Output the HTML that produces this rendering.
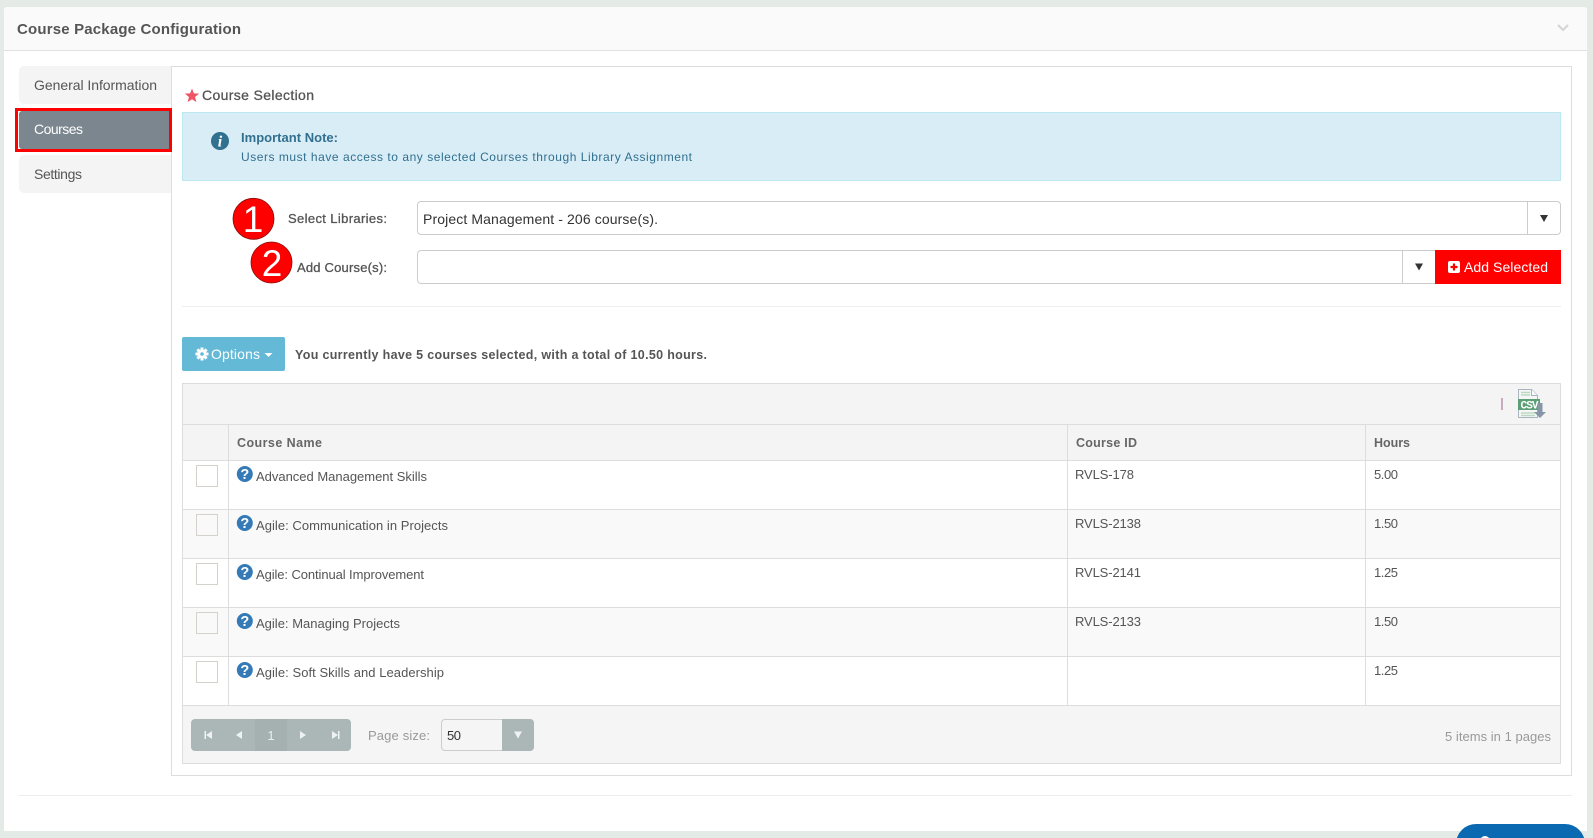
<!DOCTYPE html>
<html lang="en">
<head>
<meta charset="utf-8">
<title>Course Package Configuration</title>
<style>
html,body{margin:0;padding:0;width:1593px;height:838px;overflow:hidden;background:#e4ebe7;font-family:"Liberation Sans",Arial,sans-serif}
#wrap{position:relative;width:1593px;height:838px;overflow:hidden}
.a{position:absolute;box-sizing:border-box}
svg{position:absolute;left:0;top:0}
text{font-family:"Liberation Sans",Arial,sans-serif}
.sb{stroke-width:.3}
</style>
</head>
<body>
<div id="wrap">
<div class="a" style="left:4px;top:7px;width:1583px;height:824px;background:#fff;border-radius:3px 3px 0 0"></div>
<div class="a" style="left:4px;top:7px;width:1583px;height:44px;background:#fafafa;border-bottom:1px solid #e1e1e1;border-radius:3px 3px 0 0"></div>

<div class="a" style="left:19px;top:66px;width:153px;height:38px;background:#f4f4f4;border-radius:5px 0 0 5px"></div>
<div class="a" style="left:19px;top:155px;width:153px;height:38px;background:#f4f4f4;border-radius:5px 0 0 5px"></div>
<div class="a" style="left:171px;top:66px;width:1401px;height:710px;background:#fff;border:1px solid #ddd"></div>
<div class="a" style="left:15px;top:108px;width:157px;height:44px;background:#fff;border:3px solid #f00"></div>
<div class="a" style="left:19px;top:111px;width:150px;height:38px;background:#7b868e;border-radius:3px 0 0 3px"></div>

<div class="a" style="left:182px;top:112px;width:1379px;height:69px;background:#d9edf7;border:1px solid #bce8f1"></div>

<div class="a" style="left:417px;top:201px;width:1144px;height:34px;background:#fff;border:1px solid #ccc;border-radius:4px"></div>
<div class="a" style="left:1527px;top:201px;width:1px;height:34px;background:#ccc"></div>
<div class="a" style="left:417px;top:250px;width:1019px;height:34px;background:#fff;border:1px solid #ccc;border-radius:4px 0 0 4px"></div>
<div class="a" style="left:1402px;top:250px;width:1px;height:34px;background:#ccc"></div>
<div class="a" style="left:1435px;top:250px;width:126px;height:34px;background:#f00"></div>
<div class="a" style="left:182px;top:306px;width:1379px;height:1px;background:#eee"></div>

<div class="a" style="left:182px;top:337px;width:103px;height:34px;background:#63b9d6;border-radius:2px"></div>

<div class="a" style="left:182px;top:383px;width:1379px;height:381px;background:#fff;border:1px solid #ddd"></div>
<div class="a" style="left:183px;top:384px;width:1377px;height:41px;background:#f4f4f4;border-bottom:1px solid #ddd"></div>
<div class="a" style="left:183px;top:425px;width:1377px;height:36px;background:#f4f4f4;border-bottom:1px solid #ddd"></div>
<div class="a" style="left:183px;top:461px;width:1377px;height:49px;background:#fff;border-bottom:1px solid #ddd"></div>
<div class="a" style="left:183px;top:510px;width:1377px;height:49px;background:#f9f9f9;border-bottom:1px solid #ddd"></div>
<div class="a" style="left:183px;top:559px;width:1377px;height:49px;background:#fff;border-bottom:1px solid #ddd"></div>
<div class="a" style="left:183px;top:608px;width:1377px;height:49px;background:#f9f9f9;border-bottom:1px solid #ddd"></div>
<div class="a" style="left:183px;top:657px;width:1377px;height:49px;background:#fff;border-bottom:1px solid #ddd"></div>
<div class="a" style="left:183px;top:706px;width:1377px;height:57px;background:#f5f5f5"></div>
<div class="a" style="left:228px;top:425px;width:1px;height:280px;background:#ddd"></div>
<div class="a" style="left:1067px;top:425px;width:1px;height:280px;background:#ddd"></div>
<div class="a" style="left:1365px;top:425px;width:1px;height:280px;background:#ddd"></div>

<div class="a" style="left:196px;top:465px;width:22px;height:22px;background:#fff;border:1px solid #d5d2cc"></div>
<div class="a" style="left:196px;top:514px;width:22px;height:22px;background:#f9f9f9;border:1px solid #d5d2cc"></div>
<div class="a" style="left:196px;top:563px;width:22px;height:22px;background:#fff;border:1px solid #d5d2cc"></div>
<div class="a" style="left:196px;top:612px;width:22px;height:22px;background:#f9f9f9;border:1px solid #d5d2cc"></div>
<div class="a" style="left:196px;top:661px;width:22px;height:22px;background:#fff;border:1px solid #d5d2cc"></div>

<div class="a" style="left:191px;top:719px;width:160px;height:32px;background:#abb7b7;border-radius:4px"></div>
<div class="a" style="left:255px;top:719px;width:32px;height:32px;background:#a5b1b1"></div>
<div class="a" style="left:441px;top:719px;width:93px;height:32px;background:#f5f5f5;border:1px solid #ccc;border-radius:4px"></div>
<div class="a" style="left:502px;top:719px;width:32px;height:32px;background:#abb7b7;border-radius:0 4px 4px 0"></div>

<div class="a" style="left:18px;top:795px;width:1554px;height:1px;background:#eee"></div>
<div class="a" style="left:1456px;top:824px;width:129px;height:40px;background:#0a69b0;border-radius:20px"></div>

<svg width="1593" height="838" viewBox="0 0 1593 838">
  <text x="17" y="34" font-size="15" font-weight="700" fill="#555" textLength="224">Course Package Configuration</text>
  <path d="M1558 25l5 5 5-5" fill="none" stroke="#d4d4d4" stroke-width="2"/>

  <text x="34" y="90" font-size="14" fill="#555" textLength="123">General Information</text>
  <text x="34" y="134" font-size="14" fill="#fff" textLength="49">Courses</text>
  <text x="34" y="179" font-size="14" fill="#555" textLength="48">Settings</text>

  <path d="M192 88.500L193.880 93.410 199.130 93.680 195.040 96.990 196.410 102.070 192 99.200 187.590 102.070 188.960 96.990 184.870 93.680 190.120 93.410z" fill="#ef5465"/>
  <text x="202" y="100" font-size="14" fill="#555" stroke="#555" class="sb" textLength="112">Course Selection</text>

  <circle cx="220" cy="141" r="9" fill="#31708f"/>
  <text x="220" y="146.500" font-size="16" font-weight="700" font-style="italic" fill="#fff" text-anchor="middle" style="font-family:'Liberation Serif',serif">i</text>
  <text x="241" y="142" font-size="13" font-weight="700" fill="#31708f" textLength="97">Important Note:</text>
  <text x="241" y="161" font-size="12" fill="#31708f" textLength="451">Users must have access to any selected Courses through Library Assignment</text>

  <circle cx="253.500" cy="218.800" r="20.500" fill="#f00" stroke="#8c0a0a" stroke-width=".8"/>
  <text x="253" y="232" font-size="37" fill="#fff" text-anchor="middle">1</text>
  <circle cx="271.500" cy="262.500" r="20.500" fill="#f00" stroke="#8c0a0a" stroke-width=".8"/>
  <text x="272" y="276" font-size="37" fill="#fff" text-anchor="middle">2</text>

  <text x="288" y="223" font-size="13" fill="#555" stroke="#555" class="sb" textLength="99">Select Libraries:</text>
  <text x="297" y="272" font-size="13" fill="#555" stroke="#555" class="sb" textLength="90">Add Course(s):</text>
  <text x="423" y="224" font-size="14" fill="#333" textLength="235">Project Management - 206 course(s).</text>
  <path d="M1540 215h8l-4 7z" fill="#333"/>
  <path d="M1415 263.500h8l-4 7z" fill="#333"/>

  <rect x="1448" y="261" width="12" height="12" rx="2" fill="#fff"/>
  <path d="M1454 263.500v7M1450.500 267h7" stroke="#f00" stroke-width="2.200"/>
  <text x="1464" y="272" font-size="14" fill="#fff" textLength="84">Add Selected</text>

  <g transform="translate(202 354)" fill="#fff">
    <circle r="4.500"/>
    <path d="M-1.500-6.500h3v3h-3zM-1.500 3.500h3v3h-3zM-6.500-1.500h3v3h-3zM3.500-1.500h3v3h-3z"/>
    <path d="M-1.500-6.500h3v3h-3zM-1.500 3.500h3v3h-3zM-6.500-1.500h3v3h-3zM3.500-1.500h3v3h-3z" transform="rotate(45)"/>
    <circle r="1.800" fill="#63b9d6"/>
  </g>
  <text x="211" y="359" font-size="14" fill="#fff" textLength="49">Options</text>
  <path d="M264.500 353h8l-4 4z" fill="#fff"/>
  <text x="295" y="359" font-size="12.500" font-weight="700" fill="#555" textLength="412">You currently have 5 courses selected, with a total of 10.50 hours.</text>

  <rect x="1501.500" y="398" width="1" height="12" fill="#a0608c"/>
  <path d="M1518.500 389.500h13l6 6v22h-19z" fill="#f4f7f5" stroke="#a9b4bf"/>
  <path d="M1531.500 389.500v6h6" fill="#fff" stroke="#a9b4bf"/>
  <path d="M1521 392.500h9M1521 395h9M1521 413h14M1521 415.500h14" stroke="#bcd8c4" stroke-width="1.500"/>
  <rect x="1518" y="399" width="22" height="11" fill="#5c9e76"/>
  <text x="1520.500" y="408.500" style="font-family:'Liberation Mono',monospace" font-size="11" font-weight="700" fill="#fff" textLength="18">CSV</text>
  <path d="M1537.500 403h5v9h3.500l-6 6-6-6h3.500z" fill="#8696a8"/>

  <g font-size="12.500" font-weight="700" fill="#666">
    <text x="237" y="447" textLength="85">Course Name</text>
    <text x="1076" y="447" textLength="61">Course ID</text>
    <text x="1374" y="447" textLength="36">Hours</text>
  </g>

  <g font-size="13" fill="#555">
    <text x="256" y="481" textLength="171">Advanced Management Skills</text>
    <text x="256" y="530" textLength="192">Agile: Communication in Projects</text>
    <text x="256" y="579" textLength="168">Agile: Continual Improvement</text>
    <text x="256" y="628" textLength="144">Agile: Managing Projects</text>
    <text x="256" y="677" textLength="188">Agile: Soft Skills and Leadership</text>
    <text x="1075" y="479" textLength="59">RVLS-178</text>
    <text x="1075" y="528" textLength="66">RVLS-2138</text>
    <text x="1075" y="577" textLength="66">RVLS-2141</text>
    <text x="1075" y="626" textLength="66">RVLS-2133</text>
    <text x="1374" y="479" textLength="24">5.00</text>
    <text x="1374" y="528" textLength="24">1.50</text>
    <text x="1374" y="577" textLength="24">1.25</text>
    <text x="1374" y="626" textLength="24">1.50</text>
    <text x="1374" y="675" textLength="24">1.25</text>
  </g>

  <g>
    <circle cx="244.800" cy="474" r="8" fill="#337ab7"/><text x="244.800" y="479" font-size="14.500" font-weight="700" fill="#fff" text-anchor="middle">?</text>
    <circle cx="244.800" cy="523" r="8" fill="#337ab7"/><text x="244.800" y="528" font-size="14.500" font-weight="700" fill="#fff" text-anchor="middle">?</text>
    <circle cx="244.800" cy="572" r="8" fill="#337ab7"/><text x="244.800" y="577" font-size="14.500" font-weight="700" fill="#fff" text-anchor="middle">?</text>
    <circle cx="244.800" cy="621" r="8" fill="#337ab7"/><text x="244.800" y="626" font-size="14.500" font-weight="700" fill="#fff" text-anchor="middle">?</text>
    <circle cx="244.800" cy="670" r="8" fill="#337ab7"/><text x="244.800" y="675" font-size="14.500" font-weight="700" fill="#fff" text-anchor="middle">?</text>
  </g>

  <path d="M204.500 731h1.500v8h-1.500zM212 731v8l-6-4z" fill="#eef2f2"/>
  <path d="M242 731v8l-6-4z" fill="#eef2f2"/>
  <text x="271" y="740" font-size="13" fill="#e8eeee" text-anchor="middle">1</text>
  <path d="M300 731v8l6-4z" fill="#eef2f2"/>
  <path d="M332 731v8l6-4zM338 731h1.500v8H338z" fill="#eef2f2"/>
  <text x="368" y="740" font-size="13" fill="#999" textLength="62">Page size:</text>
  <text x="447" y="740" font-size="13" fill="#333" textLength="14">50</text>
  <path d="M514 731.500h8l-4 7z" fill="#eef2f2"/>
  <text x="1445" y="741" font-size="13" fill="#999" textLength="106">5 items in 1 pages</text>

  <circle cx="1485" cy="841" r="5" fill="#fff"/>
</svg>
</div>
</body>
</html>
